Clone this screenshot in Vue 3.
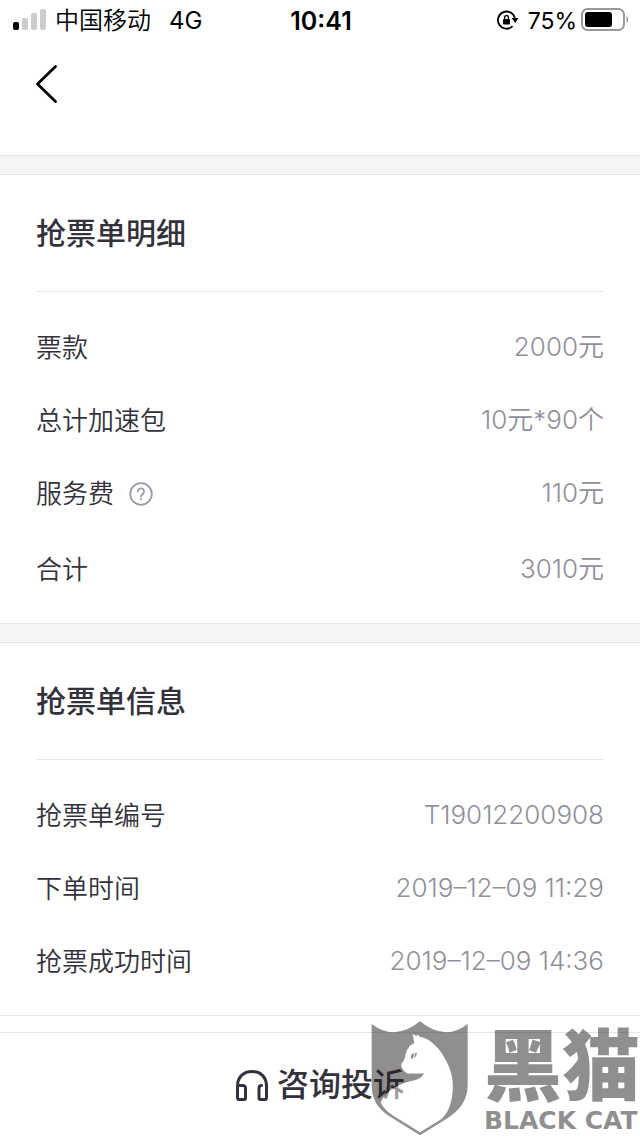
<script setup>
import { ref } from 'vue'

const carrier = ref('中国移动')
const network = ref('4G')
const clock = ref('10:41')
const battery = ref(75)

const sections = ref([
  {
    title: '抢票单明细',
    rows: [
      { label: '票款', value: '2000元' },
      { label: '总计加速包', value: '10元*90个' },
      { label: '服务费', value: '110元', help: true },
      { label: '合计', value: '3010元', total: true }
    ]
  },
  {
    title: '抢票单信息',
    rows: [
      { label: '抢票单编号', value: 'T19012200908' },
      { label: '下单时间', value: '2019–12–09 11:29' },
      { label: '抢票成功时间', value: '2019–12–09 14:36' }
    ]
  }
])

function goBack() {
  window.history.back()
}
</script>

<template>
  <div class="page">
    <div class="status-bar">
      <div class="status-left">
        <svg class="signal" width="34" height="22" viewBox="0 0 34 22">
          <rect x="0" y="13" width="6" height="8" rx="2" fill="#000" />
          <rect x="9" y="9" width="6" height="12" rx="2" fill="#ccc" />
          <rect x="18" y="4" width="6" height="17" rx="2" fill="#ccc" />
          <rect x="27" y="0" width="6" height="21" rx="2" fill="#ccc" />
        </svg>
        <span class="carrier">{{ carrier }}</span>
        <span class="network">{{ network }}</span>
      </div>
      <span class="clock">{{ clock }}</span>
      <div class="status-right">
        <svg width="22" height="20" viewBox="0 0 22 20">
          <path d="M15.6 16.2A8.600 8.600 0 1 1 17.800 7.800" fill="none" stroke="#000" stroke-width="1.800" />
          <path d="M14.600 8h6.800l-3.200 5z" fill="#000" />
          <rect x="6" y="9" width="7" height="5.600" rx="0.800" fill="#000" />
          <path d="M7.600 9.400V7.400a1.900 1.900 0 0 1 3.800 0v2" fill="none" stroke="#000" stroke-width="1.300" />
        </svg>
        <span class="percent">{{ battery }}%</span>
        <svg width="48" height="24" viewBox="0 0 48 24">
          <rect x="1" y="1" width="42" height="21" rx="5.500" fill="none" stroke="#999" stroke-width="2" />
          <rect x="4" y="4" width="27" height="15" rx="3" fill="#000" />
          <path d="M45.500 8c2.200 1 2.200 6 0 7z" fill="#999" />
        </svg>
      </div>
    </div>

    <header class="nav">
      <button class="back" aria-label="返回" @click="goBack">
        <svg width="24" height="40" viewBox="0 0 24 40">
          <path d="M21.500 2.500L3.500 20l18 17.500" fill="none" stroke="#000" stroke-width="2.800" stroke-linecap="round" stroke-linejoin="round" />
        </svg>
      </button>
    </header>

    <section v-for="section in sections" :key="section.title" class="section">
      <div class="divider"></div>
      <div class="content">
        <h2>{{ section.title }}</h2>
        <dl>
          <div v-for="row in section.rows" :key="row.label" class="row" :class="{ total: row.total }">
            <dt>
              {{ row.label }}
              <button v-if="row.help" class="help" aria-label="服务费说明">
                <svg width="24" height="24" viewBox="0 0 24 24" fill="none" stroke="#9b9aa5">
                  <circle cx="12" cy="12" r="10.800" stroke-width="1.800" />
                  <path d="M9 9.400a3 3 0 1 1 4.900 2.300c-1.200.9-1.900 1.400-1.900 2.800" stroke-width="1.800" stroke-linecap="round" />
                  <path d="M12 17.200v.4" stroke-width="2" stroke-linecap="round" />
                </svg>
              </button>
            </dt>
            <dd>{{ row.value }}</dd>
          </div>
        </dl>
      </div>
    </section>

    <div class="divider plain"></div>

    <footer class="footer">
      <button class="consult">
        <svg width="34" height="34" viewBox="0 0 34 34" fill="none" stroke="#33323c" stroke-width="3" stroke-linejoin="round" stroke-linecap="round">
          <path d="M3 17.500h5A2.500 2.500 0 0 1 10.500 20v10A1.500 1.500 0 0 1 9 31.500H4A1.500 1.500 0 0 1 2.500 30V18C2.500 9 8.500 3.500 17 3.500S31.500 9 31.500 18v12a1.500 1.500 0 0 1-1.500 1.500h-4.500A1.500 1.500 0 0 1 24 30V20a2.500 2.500 0 0 1 2.500-2.500" />
        </svg>
        咨询投诉
      </button>
    </footer>

    <div class="watermark">
      <svg width="97" height="115" viewBox="33 33 291 345">
        <path d="M35 42Q105 95 180 34Q255 95 323 42V225C323 270 300 300 262 325L180 376L98 325C55 300 35 270 35 225Z" fill="#231f20" />
        <path d="M163 99L158 72L169 78L174 74L179 80C215 86 243 120 260 155C278 190 282 222 276 260C270 298 255 320 240 330L180 367L106 321C83 307 69 292 62 278C75 245 110 225 150 214C170 210 185 205 192 190C172 192 155 190 145 191C135 188 125 176 124 168C123 158 132 156 135 142C138 120 148 105 163 99Z" fill="#fff" />
        <path d="M152 140Q155 130 163 130L159 145L154 147ZM166 128L171 128Q170 140 162 145Z" fill="#231f20" />
      </svg>
      <div class="brand">
        <span class="brand-cn">黑猫</span>
        <span class="brand-en">BLACK CAT</span>
      </div>
    </div>
  </div>
</template>

<style>
body {
  margin: 0;
  background: #fff;
}
</style>

<style scoped>
.page {
  position: relative;
  min-height: 100vh;
  overflow: hidden;
  background: #fff;
  color: #33323c;
  font-family: Inter, "Noto Sans CJK SC", sans-serif;
}

button {
  display: flex;
  align-items: center;
  padding: 0;
  border: none;
  background: none;
  color: inherit;
  font-family: inherit;
  cursor: pointer;
}

.status-bar {
  display: grid;
  grid-template-columns: 1fr auto 1fr;
  align-items: center;
  height: 40px;
  padding: 0 11px 0 13px;
  color: #000;
  font-size: 24px;
  line-height: 38px;
}

.status-bar span {
  padding-top: 2px;
}

.status-left,
.status-right {
  display: flex;
  align-items: center;
}

.status-right {
  justify-content: flex-end;
}

.signal {
  margin-right: 8px;
}

.carrier {
  font-weight: 350;
}

.network {
  margin-left: 18px;
}

.clock {
  font-size: 25px;
  font-weight: 600;
}

.percent {
  margin: 0 4px 0 9px;
  font-size: 23px;
}

.nav {
  height: 115px;
  padding-left: 34px;
}

.back {
  height: 88px;
}

.divider {
  box-sizing: border-box;
  height: 20px;
  border-top: 1px solid #e6e6e8;
  border-bottom: 1px solid #e6e6e8;
  background: #f5f5f7;
}

.divider.plain {
  height: 18px;
  background: #fff;
}

.content {
  padding: 0 36px 18px;
}

h2 {
  margin: 0 0 18px;
  border-bottom: 1px solid #e6e6e8;
  font-size: 30px;
  font-weight: 500;
  line-height: 116px;
}

dl {
  margin: 0;
}

.row {
  display: flex;
  justify-content: space-between;
  align-items: center;
  height: 73px;
  font-size: 26px;
  font-weight: 350;
  line-height: 38px;
}

.row.total {
  margin-top: 3px;
}

dt {
  display: flex;
  align-items: center;
  gap: 15px;
  padding-top: 2px;
}

dd {
  margin: 0;
  color: #918f9b;
}

.footer {
  display: flex;
  justify-content: center;
}

.consult {
  gap: 8px;
  height: 103px;
  font-size: 32px;
  font-weight: 500;
  line-height: 40px;
}

.watermark {
  position: absolute;
  right: 0;
  bottom: 0;
  display: flex;
  gap: 16px;
  opacity: 0.5;
  color: #231f20;
  pointer-events: none;
}

.brand {
  display: flex;
  flex-direction: column;
  padding-top: 6px;
}

.brand-cn {
  font-size: 78px;
  font-weight: 900;
  line-height: 80px;
}

.brand-en {
  font-family: "DejaVu Sans", sans-serif;
  font-size: 25px;
  font-weight: 700;
  line-height: 28px;
}
</style>
